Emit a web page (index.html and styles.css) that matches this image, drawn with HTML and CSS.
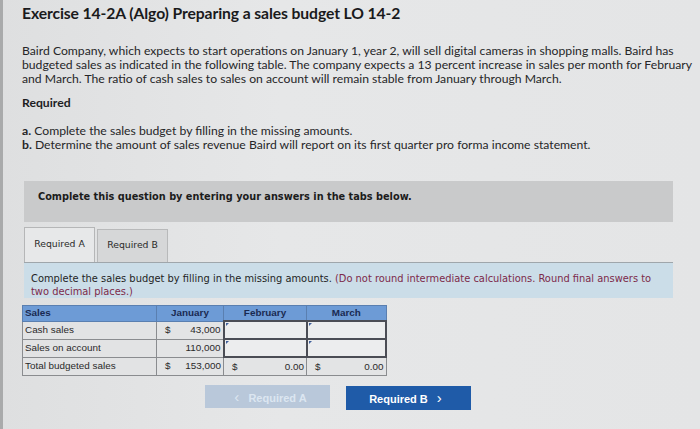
FILE: index.html
```html
<!DOCTYPE html>
<html>
<head>
<meta charset="utf-8">
<link rel="stylesheet" href="styles.css">
</head>
<body>
<div class="page">
  <h1 class="title">Exercise 14-2A (Algo) Preparing a sales budget LO 14-2</h1>
  <p class="intro">Baird Company, which expects to start operations on January 1, year 2, will sell digital cameras in shopping malls. Baird has budgeted sales as indicated in the following table. The company expects a 13 percent increase in sales per month for February and March. The ratio of cash sales to sales on account will remain stable from January through March.</p>
  <h2 class="req">Required</h2>
  <div class="tasks">
    <div><b>a.</b> Complete the sales budget by filling in the missing amounts.</div>
    <div><b>b.</b> Determine the amount of sales revenue Baird will report on its first quarter pro forma income statement.</div>
  </div>
  <div class="banner">Complete this question by entering your answers in the tabs below.</div>
  <div class="tabs">
    <div class="tab active">Required A</div>
    <div class="tab">Required B</div>
  </div>
  <div class="instr">Complete the sales budget by filling in the missing amounts. <span class="note">(Do not round intermediate calculations. Round final answers to two decimal places.)</span></div>
  <table class="budget">
    <tr class="head"><th class="lbl">Sales</th><th class="jan">January</th><th class="feb">February</th><th class="mar">March</th></tr>
    <tr><td class="lbl">Cash sales</td><td class="num"><span class="cur">$</span>43,000</td><td class="inp"></td><td class="inp"></td></tr>
    <tr><td class="lbl">Sales on account</td><td class="num">110,000</td><td class="inp"></td><td class="inp"></td></tr>
    <tr class="total"><td class="lbl">Total budgeted sales</td><td class="num"><span class="cur">$</span>153,000</td><td class="num"><span class="cur">$</span>0.00</td><td class="num"><span class="cur">$</span>0.00</td></tr>
  </table>
  <div class="nav">
    <div class="btn prev"><span class="chev">&lsaquo;</span> Required A</div>
    <div class="btn next">Required B <span class="chev">&rsaquo;</span></div>
  </div>
</div>
</body>
</html>
```
FILE: styles.css
```css
html, body { margin: 0; padding: 0; }
body {
  width: 700px; height: 429px; overflow: hidden;
  background: linear-gradient(90deg, #dedfe0 0%, #e6e7e8 40%, #e4e5e6 100%);
  font-family: "Lato", "Liberation Sans", sans-serif;
  color: #1d1d1f;
}
.page {
  border-left: 3px solid #a9aaab;
  height: 429px;
  box-sizing: border-box;
  padding: 3px 0 0 19px;
}
.title {
  margin: 0; font-size: 15.7px; font-weight: 700; letter-spacing: -0.1px; color: #1a1a1c;
  line-height: 20px;
}
.intro {
  margin: 21px 0 0; font-size: 12.2px; line-height: 14px; width: 672px; color: #262628;
}
.req { margin: 10px 0 0; font-size: 12.2px; font-weight: 700; line-height: 14px; }
.tasks { margin-top: 14px; font-size: 12.2px; line-height: 14px; color: #262628; }
.banner {
  margin: 29px 0 0 2px; width: 649px; height: 41px; box-sizing: border-box;
  background: #c9cacb; padding: 10px 0 0 14px;
  font-family: "DejaVu Sans", Verdana, sans-serif; font-weight: 700; font-size: 9.75px; color: #1c1c1c;
}
.tabs { display: flex; align-items: flex-end; margin: 5px 0 0 2px; height: 35px; gap: 2px; }
.tab {
  font-family: "DejaVu Sans", Verdana, sans-serif; font-size: 9.3px; color: #2a2a2a;
  box-sizing: border-box; width: 71px; height: 33px; padding-top: 9px; text-align: center;
  background: #d6d7d8; border: 1px solid #b8b9ba; border-bottom: none;
}
.tab.active { height: 35px; padding-top: 10px; background: #e7e8e9; border-color: #b5b6b7; }
.instr {
  margin-left: 2px; width: 649px; height: 36px; box-sizing: border-box;
  background: #cbdde8; border-top: 1px solid #9fa6ab;
  padding: 9px 10px 0 7px;
  font-family: "DejaVu Sans", Verdana, sans-serif; font-size: 9.9px; line-height: 13px; color: #1f1f1f;
}
.note { color: #7d2a4a; }
.budget {
  margin-top: 7px; border-collapse: collapse; width: 365px;
  font-family: "Liberation Sans", Arial, sans-serif; font-size: 9.9px; color: #2a2a2a;
}
.budget th, .budget td { border: 1px solid #8a8c8f; padding: 0; height: 16px; line-height: 12px; }
.budget .head th { background: #6d9bd6; color: #1a2a52; font-weight: 700; height: 14px; text-align: center; border-color: #5a7fb0; }
.budget .head th.lbl { text-align: left; padding-left: 2px; }
.budget td.lbl { width: 131px; padding-left: 2px; background: #e2e3e4; }
.budget .jan { width: 66px; }
.budget .feb { width: 82px; }
.budget td.num { text-align: right; padding-right: 2px; background: #e3e4e5; }
.budget .cur { float: left; padding-left: 8px; }
.budget td.inp { background: #ecedee; border: 2px solid #4b4d55; position: relative; }
.budget td.inp::before {
  content: ""; position: absolute; left: 1px; top: 1px;
  border-left: 3px solid #3f5f9a; border-bottom: 3px solid transparent;
}
.budget tr.total td { height: 17px; }
.nav { display: flex; gap: 16px; margin: 9px 0 0 183px; }
.btn {
  width: 125px; height: 23px; box-sizing: border-box; text-align: center;
  font-family: "Liberation Sans", Arial, sans-serif; font-weight: 700; font-size: 11px; line-height: 23px;
}
.prev { background: #b9c8da; color: #dce6f1; }
.next { background: #1f5ba8; color: #ffffff; margin-top: 1px; height: 24px; line-height: 24px; }
.chev { font-size: 15px; margin: 0 6px; font-weight: 400; }
```
